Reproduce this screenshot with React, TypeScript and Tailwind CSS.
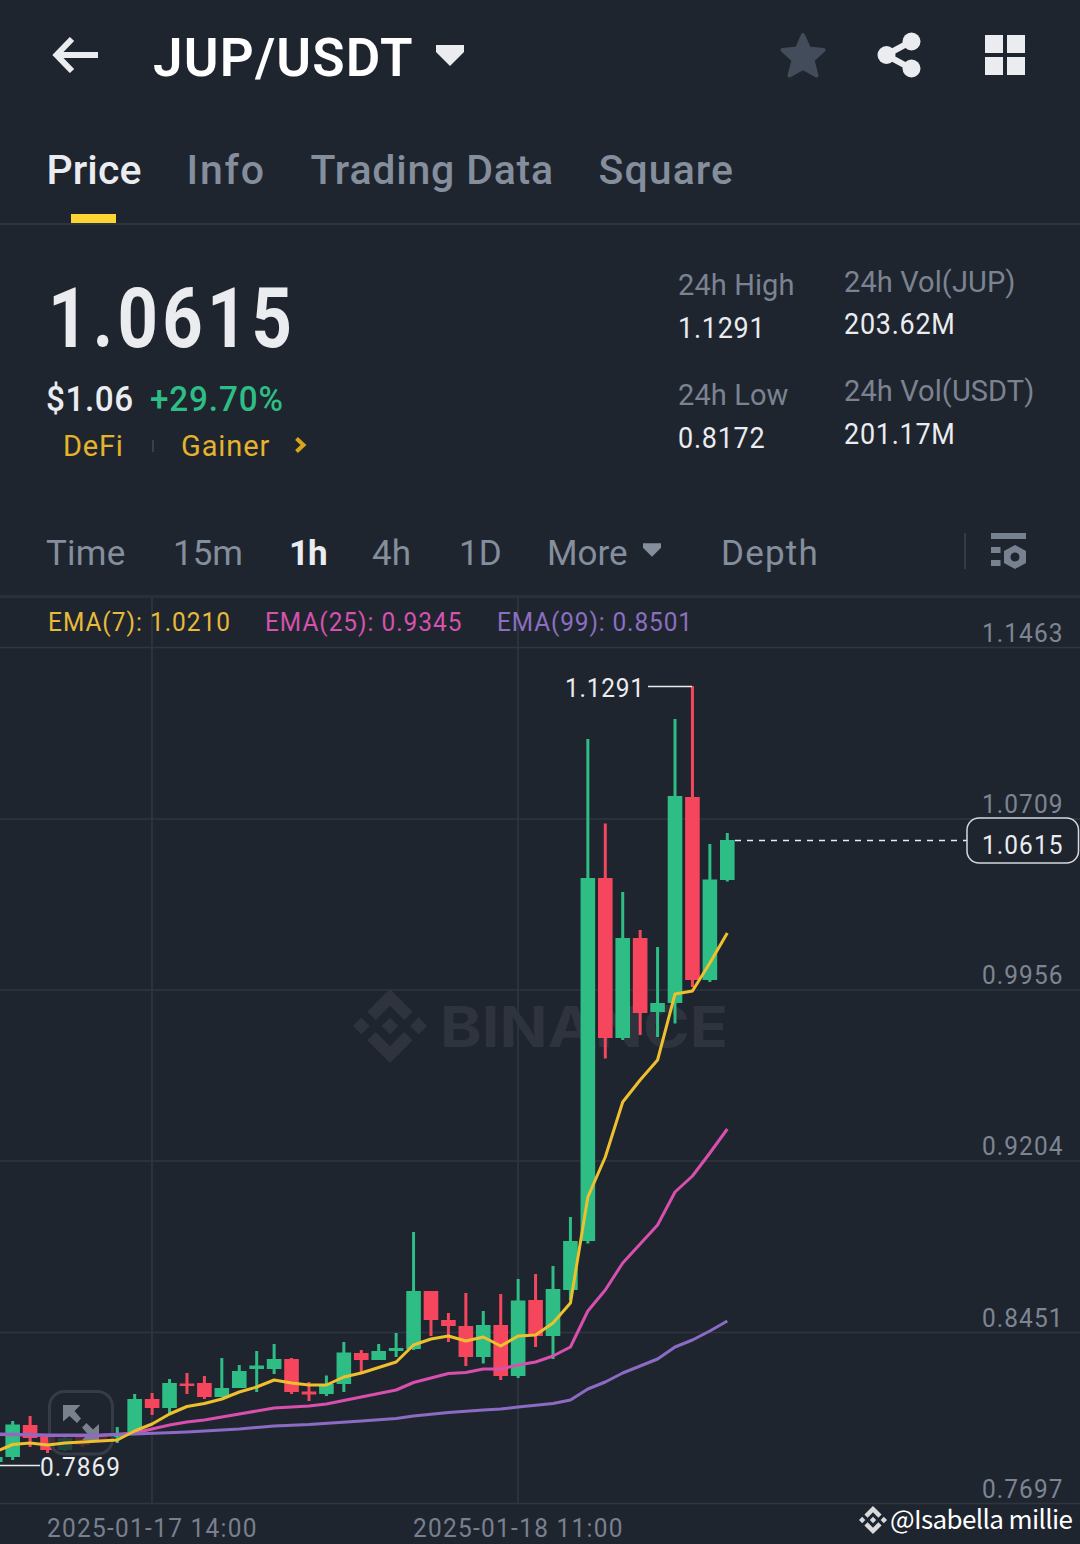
import clsx from 'clsx'
import { type ReactNode } from 'react'
import { SiBinance } from 'react-icons/si'

const UP = '#2ebd85'
const DOWN = '#f6465d'

const STEP = 17.43
const LAST_X = 727.3
const xAt = (index: number) => LAST_X - index * STEP

type Candle = [
	index: number,
	direction: 'up' | 'down',
	high: number,
	top: number,
	bottom: number,
	low: number,
]

// index counts back from the most recent candle
const candles: Candle[] = [
	[42, 'up', 1457, 1457, 1462, 1462],
	[41, 'up', 1421, 1424.5, 1457, 1460],
	[40, 'down', 1416, 1425, 1438, 1447],
	[39, 'down', 1436, 1437, 1450, 1453],
	[38, 'up', 1436, 1438, 1450, 1451],
	[37, 'down', 1436, 1437, 1445, 1447],
	[36, 'down', 1434, 1436, 1440, 1442],
	[35, 'up', 1427, 1434, 1437, 1443],
	[34, 'up', 1394, 1399, 1433, 1434],
	[33, 'down', 1393, 1399, 1408, 1415],
	[32, 'up', 1379, 1383, 1408, 1414],
	[31, 'down', 1373, 1383.5, 1386, 1394],
	[30, 'down', 1376, 1383, 1397, 1399],
	[29, 'up', 1358, 1388, 1397, 1397],
	[28, 'up', 1365, 1371, 1388, 1388],
	[27, 'up', 1351, 1365.5, 1369, 1392],
	[26, 'up', 1344, 1359, 1369, 1374],
	[25, 'down', 1358, 1359, 1392, 1394],
	[24, 'down', 1382, 1391.5, 1394.5, 1401],
	[23, 'up', 1375.5, 1384, 1394, 1396],
	[22, 'up', 1342, 1352.5, 1384, 1392],
	[21, 'down', 1350, 1353, 1360, 1373],
	[20, 'up', 1344, 1351, 1360, 1360],
	[19, 'up', 1333, 1348, 1351, 1357],
	[18, 'up', 1232, 1291, 1349, 1350],
	[17, 'down', 1291, 1291, 1320, 1336],
	[16, 'down', 1313, 1320, 1326, 1342],
	[15, 'down', 1293, 1326, 1357, 1366],
	[14, 'up', 1311, 1325, 1357, 1363.5],
	[13, 'down', 1294, 1325, 1376, 1380],
	[12, 'up', 1279, 1300.5, 1376, 1378],
	[11, 'down', 1274, 1300, 1336, 1347],
	[10, 'up', 1266, 1289, 1336, 1359],
	[9, 'up', 1217, 1241, 1290, 1300],
	[8, 'up', 739, 878, 1241, 1243.5],
	[7, 'down', 823.5, 878, 1038, 1058.5],
	[6, 'up', 892, 938, 1038, 1040],
	[5, 'down', 930, 938, 1013, 1035],
	[4, 'up', 947, 1003, 1012, 1037],
	[3, 'up', 719, 796, 1003, 1023.5],
	[2, 'down', 686, 797, 980, 987],
	[1, 'up', 844, 879.5, 980, 982],
	[0, 'up', 833, 840, 880, 881.5],
]

const averages = [
	{
		color: '#d94fae',
		points: [
			[0, 1129], [1, 1153], [2, 1176], [3, 1192], [4, 1225], [5, 1244],
			[6, 1263], [7, 1290], [8, 1311], [9, 1347], [10, 1356], [11, 1362],
			[12, 1365], [13, 1369], [14, 1369], [15, 1372.5], [16, 1373.5],
			[17, 1378], [18, 1382.5], [19, 1390], [20, 1393.5], [21, 1397],
			[22, 1400.5], [23, 1404], [24, 1406], [25, 1407], [26, 1408],
			[28, 1414], [30, 1420], [31, 1422], [32, 1425], [33, 1429],
			[34, 1433], [36, 1435.5], [39, 1435.5], [42, 1434.5],
		],
	},
	{
		color: '#8c6bc4',
		points: [
			[0, 1321], [1, 1331], [2, 1340], [3, 1347], [4, 1359], [5, 1366],
			[6, 1373], [7, 1382], [8, 1389], [9, 1400], [10, 1403.5], [12, 1407],
			[13, 1409], [14, 1410], [16, 1412.5], [18, 1416], [19, 1418.5],
			[21, 1421], [24, 1424.5], [26, 1426], [28, 1429], [31, 1432],
			[34, 1434], [36, 1435], [39, 1435], [42, 1434],
		],
	},
	{
		color: '#efc02e',
		points: [
			[0, 933], [1, 963], [2, 991], [3, 994], [4, 1060], [5, 1080],
			[6, 1102], [7, 1157], [8, 1197], [9, 1303], [10, 1323], [11, 1335],
			[12, 1336], [13, 1346], [14, 1337], [15, 1341], [16, 1336],
			[17, 1339], [18, 1345], [19, 1362], [20, 1367.5], [21, 1373],
			[22, 1377], [23, 1385], [24, 1385], [25, 1383], [26, 1380],
			[27, 1387], [28, 1392], [29, 1399], [30, 1403.5], [31, 1406.5],
			[32, 1414], [33, 1424], [34, 1431], [35, 1440], [36, 1441],
			[37, 1442], [38, 1443], [39, 1445], [40, 1443], [41, 1444.5],
			[42, 1452],
		],
	},
]

const gridLines = [647.5, 819, 990, 1161, 1332.5, 1503.5]

const axisLabels = [
	{ value: '1.1463', y: 642 },
	{ value: '1.0709', y: 813 },
	{ value: '0.9956', y: 984 },
	{ value: '0.9204', y: 1155 },
	{ value: '0.8451', y: 1327 },
	{ value: '0.7697', y: 1498 },
]

function Label({
	x,
	y,
	width,
	squeeze = 0.94,
	className,
	children,
}: {
	x: number
	y: number
	width: number
	squeeze?: number
	className?: string
	children: ReactNode
}) {
	return (
		<text
			transform={`translate(${x} ${y}) scale(${squeeze} 1)`}
			textLength={width / squeeze}
			className={clsx('text-[26px]', className)}
		>
			{children}
		</text>
	)
}

function Caret({ className }: { className?: string }) {
	return (
		<svg viewBox="0 0 28 21" className={className} fill="currentColor">
			<path d="M0 0h28v7L14 21 0 7z" />
		</svg>
	)
}

function Header() {
	return (
		<header className="flex h-[110px] items-center pr-[55px] pl-[52px] text-[#eaecef]">
			<svg
				viewBox="0 0 46 36"
				className="h-9 w-[46px]"
				fill="none"
				stroke="currentColor"
				strokeWidth="6"
			>
				<path d="M46 18H5M20 2 4.500 18 20 34" />
			</svg>
			<h1 className="ml-[55px] w-[260px] pt-[5px] text-[53px] leading-[60px] font-semibold tracking-[1.2px] whitespace-nowrap text-white">
				JUP/USDT
			</h1>
			<Caret className="ml-[23px] h-[21px] w-7" />
			<div className="ml-auto flex items-center">
				<svg
					viewBox="0 0 46 46"
					className="h-[46px] w-[46px] text-[#434c5a]"
					fill="currentColor"
					stroke="currentColor"
					strokeWidth="4"
					strokeLinejoin="round"
				>
					<path d="M23 3l6 13.500 14.500 1.500-11 10 4 15.500L23 36 9.500 43.500l4-15.500-11-10L17 16.500z" />
				</svg>
				<svg
					viewBox="0 0 44 46"
					className="ml-[51px] h-[46px] w-11"
					fill="currentColor"
				>
					<path d="M9 23 35 9M9 23l26 14" stroke="currentColor" strokeWidth="6" />
					<circle cx="9.500" cy="23" r="9" />
					<circle cx="34.500" cy="9.500" r="9" />
					<circle cx="34.500" cy="36.500" r="9" />
				</svg>
				<div className="ml-16 grid h-10 w-10 grid-cols-2 gap-1">
					<span className="bg-current" />
					<span className="bg-current" />
					<span className="bg-current" />
					<span className="bg-current" />
				</div>
			</div>
		</header>
	)
}

const tabs = [
	{ name: 'Price', className: 'w-[94px] tracking-[0.1px]' },
	{ name: 'Info', className: 'w-[78px] tracking-[1.8px]' },
	{ name: 'Trading Data', className: 'w-[242px] tracking-[0.8px]' },
	{ name: 'Square', className: 'w-[136px] tracking-[1.1px]' },
]

function Tabs() {
	return (
		<nav className="flex h-[115px] gap-[46px] border-b-2 border-[#2f353f] pl-[46.500px]">
			{tabs.map(({ name, className }, i) => (
				<div key={name} className="flex flex-col items-center pt-[30px]">
					<span
						className={clsx(
							'text-[41px] leading-[60px] font-medium whitespace-nowrap',
							className,
							i === 0 ? 'text-[#eaecef]' : 'text-[#848e9c]',
						)}
					>
						{name}
					</span>
					{i === 0 && <span className="mt-[14px] h-[9px] w-[45px] bg-[#fcd535]" />}
				</div>
			))}
		</nav>
	)
}

function Stat({
	label,
	value,
	className,
}: {
	label: string
	value: string
	className?: string
}) {
	return (
		<div className={clsx('flex flex-col text-[29px] leading-[30px]', className)}>
			<span className="tracking-[0.1px] whitespace-nowrap text-[#7b8391]">
				{label}
			</span>
			<span className="origin-left scale-x-[0.93] tracking-[0.8px] text-[#eaecef]">
				{value}
			</span>
		</div>
	)
}

function Quote() {
	return (
		<section className="flex h-[285px]">
			<div className="w-[678px] pt-[52px] pl-[46px]">
				<div className="ml-[2px] origin-left scale-x-[0.85] text-[83px] leading-[84px] font-bold tracking-[5px] text-[#eaecef]">
					1.0615
				</div>
				<div className="mt-[19px] flex text-[35px] leading-10 font-medium">
					<span className="w-[104px] origin-left scale-x-[0.95] tracking-[0.6px] text-[#eaecef]">
						$1.06
					</span>
					<span className="origin-left scale-x-[0.95] tracking-[0.9px] text-[#2ebd85]">
						+29.70%
					</span>
				</div>
				<div className="mt-[9px] flex items-center pl-[17px] text-[29px] leading-[34px] text-[#e5b32c]">
					<span className="w-[89px] tracking-[0.8px]">DeFi</span>
					<span className="h-3 w-[2px] bg-[#3a414c]" />
					<span className="ml-[27px] w-[92px] tracking-[0.9px]">Gainer</span>
					<svg
						viewBox="0 0 12 16"
						className="mb-[2px] ml-[22px] h-4 w-3"
						fill="none"
						stroke="#dba51b"
						strokeWidth="4"
					>
						<path d="M1.500 1.500 8.500 8l-7 6.500" />
					</svg>
				</div>
			</div>
			<div className="flex w-[166px] flex-col gap-[37px] pt-[45px]">
				<Stat className="gap-[13px]" label="24h High" value="1.1291" />
				<Stat className="gap-[13px]" label="24h Low" value="0.8172" />
			</div>
			<div className="flex flex-col gap-[37px] pt-[42px]">
				<Stat className="gap-3" label="24h Vol(JUP)" value="203.62M" />
				<Stat className="gap-[13px]" label="24h Vol(USDT)" value="201.17M" />
			</div>
		</section>
	)
}

function Intervals() {
	return (
		<nav className="flex h-[88px] items-center border-b-[3px] border-[#2a303b] pl-[46px] text-[35px] leading-10 whitespace-nowrap text-[#848e9c]">
			<span className="w-[127px] pt-[2px] tracking-[0.2px]">Time</span>
			<span className="w-[116px] pt-[2px]">15m</span>
			<span className="w-[83px] pt-[2px] font-bold tracking-[-1.2px] text-[#eaecef]">
				1h
			</span>
			<span className="w-[87px] pt-[2px]">4h</span>
			<span className="w-[88px] pt-[2px]">1D</span>
			<span className="w-[96px] pt-[2px]">More</span>
			<Caret className="mb-[5px] h-[14px] w-[18px]" />
			<span className="ml-[60px] pt-[2px] tracking-[1.2px]">Depth</span>
			<span className="mb-1 ml-auto h-9 w-[2px] bg-[#343b46]" />
			<svg
				viewBox="0 0 36 36"
				className="mr-[53px] mb-[3px] ml-[25px] h-9 w-9 text-[#78818f]"
				fill="currentColor"
			>
				<path d="M0 0h35v6H0zM0 14h9.500v6H0zM0 27h9.500v6H0z" />
				<path
					fillRule="evenodd"
					d="m24 12 11 6v12l-11 6-11-6V18zm0 7.500a4.500 4.500 0 1 0 0 9 4.500 4.500 0 0 0 0-9z"
				/>
			</svg>
		</nav>
	)
}

function Chart() {
	return (
		<svg
			viewBox="0 598 1080 946"
			className="h-[946px] w-[1080px]"
			fill="currentColor"
		>
			<g stroke="#30363f" strokeWidth="1.700">
				{gridLines.map(y => (
					<path key={y} d={`M0 ${y}H1080`} />
				))}
				<path d="M152 598V1503M518 598V1503" />
			</g>

			<g className="text-[#2e333d]">
				<SiBinance x={353} y={989} size={74} />
				<text
					x="440"
					y="1047"
					textLength="288"
					lengthAdjust="spacingAndGlyphs"
					className="font-['Inter'] text-[57px] font-bold"
				>
					BINANCE
				</text>
			</g>

			{candles.map(([index, direction, high, top, bottom, low]) => (
				<g key={index} fill={direction === 'up' ? UP : DOWN}>
					<rect x={xAt(index) - 1.5} y={high} width="3" height={low - high} />
					<rect
						x={xAt(index) - 7.3}
						y={top}
						width="14.600"
						height={bottom - top}
					/>
				</g>
			))}

			<rect
				x="49.500"
				y="1391.500"
				width="63"
				height="62.500"
				rx="15"
				fill="#1f252f"
				fillOpacity="0.8"
				stroke="#363c47"
				strokeWidth="3"
			/>
			<path
				fill="#79808e"
				d="M63 1405H80.500L74.500 1411 81 1418.500 77 1423 69.500 1416 63 1421.500ZM99 1440H82L88 1434.500 82 1427.500 86.500 1423 93 1429.500 99 1424Z"
			/>

			{averages.map(({ color, points }) => (
				<polyline
					key={color}
					points={points.map(([i, y]) => `${xAt(i)},${y}`).join(' ')}
					fill="none"
					stroke={color}
					strokeWidth="3"
					strokeLinejoin="round"
				/>
			))}

			<Label x={48} y={631} width={182} className="text-[#e8ba3a]">
				EMA(7): 1.0210
			</Label>
			<Label x={265} y={631} width={196.5} className="text-[#d552ae]">
				EMA(25): 0.9345
			</Label>
			<Label x={497} y={631} width={195} className="text-[#8c6fc0]">
				EMA(99): 0.8501
			</Label>

			{axisLabels.map(({ value, y }) => (
				<Label
					key={value}
					x={982}
					y={y}
					width={80.5}
					className="text-[#7d8593]"
				>
					{value}
				</Label>
			))}

			<path
				d="M648 686.500H692M0 1465.500H40"
				stroke="#eaecef"
				strokeWidth="1.500"
			/>
			<Label x={565} y={697} width={79} className="text-[#eaecef]">
				1.1291
			</Label>
			<Label x={40} y={1476} width={80} className="text-[#eaecef]">
				0.7869
			</Label>

			<path
				d="M735 840.500H967"
				stroke="#eaecef"
				strokeWidth="1.500"
				strokeDasharray="6 6"
			/>
			<rect
				x="967"
				y="818"
				width="111.500"
				height="45"
				rx="12"
				fill="#1f252f"
				stroke="#d5d9de"
				strokeWidth="1.500"
			/>
			<Label x={982} y={854} width={80.5} className="text-[#eaecef]">
				1.0615
			</Label>

			<Label x={47} y={1537} width={209.5} className="text-[#78808e]">
				2025-01-17 14:00
			</Label>
			<Label x={413} y={1537} width={209.5} className="text-[#78808e]">
				2025-01-18 11:00
			</Label>

			<SiBinance x={859} y={1506} size={28} className="text-[#d9dadc]" />
			<Label
				x={890}
				y={1529}
				width={183}
				squeeze={1}
				className="font-['Noto_Sans_CJK_SC',sans-serif] text-white"
			>
				@Isabella millie
			</Label>
		</svg>
	)
}

export default function App() {
	return (
		<main className="flex h-[1544px] w-[1080px] flex-col overflow-hidden bg-[#1f252f] font-['Roboto',sans-serif]">
			<Header />
			<Tabs />
			<Quote />
			<Intervals />
			<Chart />
		</main>
	)
}
